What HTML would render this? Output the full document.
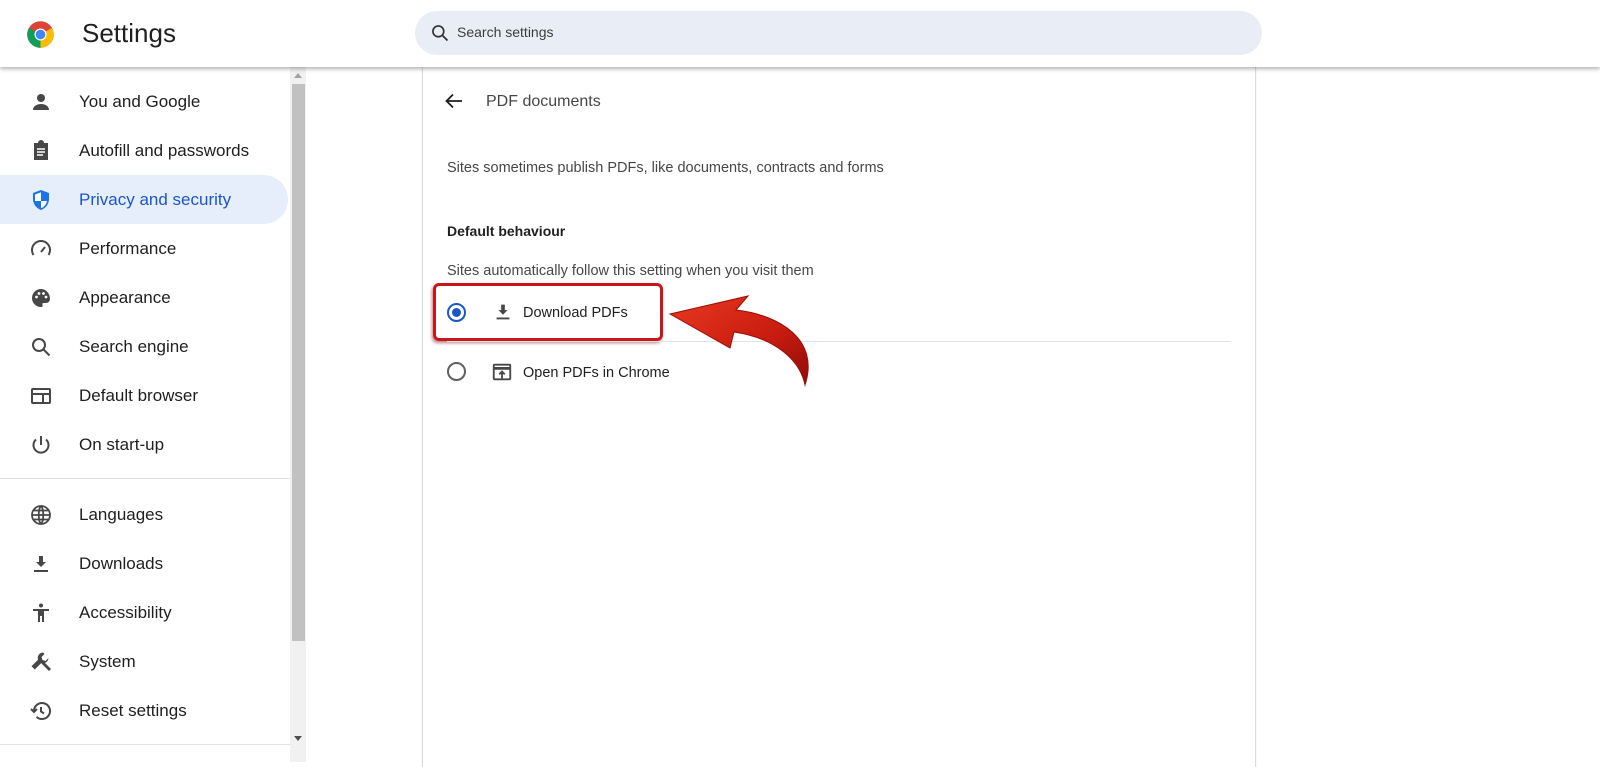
<!DOCTYPE html>
<html><head><meta charset="utf-8"><style>
*{margin:0;padding:0;box-sizing:border-box}
body{width:1600px;height:762px;overflow:hidden;background:#fff;font-family:"Liberation Sans",sans-serif;position:relative;color:#1f1f1f}
.hdr{position:absolute;left:0;top:0;width:1600px;height:67px;background:#fff;box-shadow:0 2px 4px rgba(0,0,0,.3);z-index:5}
.title{position:absolute;left:82px;top:18px;font-size:26px;color:#1f1f1f}
.search{position:absolute;left:415px;top:11px;width:847px;height:44px;border-radius:22px;background:#e9eef6}
.search span{position:absolute;left:42px;top:13px;font-size:14px;color:#3c3c3c}
.nav{position:absolute;left:0;width:288px;height:49px;}
.nav .t{position:absolute;left:79px;top:15px;font-size:17px;color:#1f1f1f}
.nav svg{position:absolute;left:29px;top:13px}
.nav.sel{background:#e6eefb;border-radius:0 25px 25px 0}
.nav.sel .t{color:#1a56c8}
.sep{position:absolute;left:0;width:290px;height:1px;background:#e3e3e3}
.card{position:absolute;left:422px;top:67px;width:834px;height:700px;border-left:1px solid #dcdcdc;border-right:1px solid #dcdcdc;box-shadow:0 0 2px rgba(0,0,0,.08)}
.txt{position:absolute;font-size:14.5px;color:#474747}
</style></head><body>
<div class="hdr">
<svg style="position:absolute;left:26px;top:20px" width="29" height="29" viewBox="0 0 48 48">
<circle cx="24" cy="24" r="22" fill="#db4437"/>
<path d="M24 24 L43.05 13 A22 22 0 0 1 24 46 Z" fill="#fbbc05"/>
<path d="M24 24 L24 46 A22 22 0 0 1 4.95 13 Z" fill="#0f9d58"/>
<circle cx="24" cy="24" r="10" fill="#fff"/><circle cx="24" cy="24" r="8" fill="#4285f4"/>
</svg>
<div class="title">Settings</div>
<div class="search"><svg style="position:absolute;left:15px;top:12px" width="20" height="20" viewBox="0 0 24 24"><circle cx="10" cy="10" r="6.5" fill="none" stroke="#333" stroke-width="2"/><path d="M15 15l6 6" stroke="#333" stroke-width="2.2"/></svg><span>Search settings</span></div>
</div>

<div class="nav" style="top:77px"><svg width="24" height="24" viewBox="0 0 24 24" fill="#474747"><circle cx="12" cy="8" r="4"/><path d="M4 20c0-4 4-6 8-6s8 2 8 6z"/></svg><div class="t">You and Google</div></div>
<div class="nav" style="top:126px"><svg width="24" height="24" viewBox="0 0 24 24" fill="#474747"><path d="M5 4h4a3 3 0 0 1 6 0h4v17H5z"/><path d="M8 10h8M8 13h8M8 16h6" stroke="#fff" stroke-width="1.4"/></svg><div class="t">Autofill and passwords</div></div>
<div class="nav sel" style="top:175px"><svg width="24" height="24" viewBox="0 0 24 24"><path d="M12 2l8 3v6c0 5-3.5 9.5-8 11-4.5-1.5-8-6-8-11V5z" fill="#1a73e8"/><path d="M12 4.3v8.7H6V6.5zM12 13h6c-.7 3.5-3 6.2-6 7.3z" fill="#fff"/></svg><div class="t">Privacy and security</div></div>
<div class="nav" style="top:224px"><svg width="24" height="24" viewBox="0 0 24 24" fill="none" stroke="#474747" stroke-width="2"><path d="M4.5 18a9 9 0 1 1 15 0"/><path d="M12 15l4-5"/></svg><div class="t">Performance</div></div>
<div class="nav" style="top:273px"><svg width="24" height="24" viewBox="0 0 24 24" fill="#474747"><path d="M12 3a9 9 0 0 0 0 18c1.5 0 2-1 1.5-2s0-2 1.5-2h2a4 4 0 0 0 4-4c0-5.5-4-10-9-10z"/><circle cx="7.5" cy="11" r="1.4" fill="#fff"/><circle cx="10" cy="7.5" r="1.4" fill="#fff"/><circle cx="14.5" cy="7.5" r="1.4" fill="#fff"/><circle cx="17" cy="11" r="1.4" fill="#fff"/></svg><div class="t">Appearance</div></div>
<div class="nav" style="top:322px"><svg width="24" height="24" viewBox="0 0 24 24" fill="none" stroke="#474747" stroke-width="2"><circle cx="10" cy="10" r="6"/><path d="M14.5 14.5l6 6"/></svg><div class="t">Search engine</div></div>
<div class="nav" style="top:371px"><svg width="24" height="24" viewBox="0 0 24 24" fill="none" stroke="#474747" stroke-width="2"><rect x="3" y="5" width="18" height="14" rx="1"/><path d="M3 10h18M14 10v9"/></svg><div class="t">Default browser</div></div>
<div class="nav" style="top:420px"><svg width="24" height="24" viewBox="0 0 24 24" fill="none" stroke="#474747" stroke-width="2"><path d="M12 3v9"/><path d="M7 6.5a7.5 7.5 0 1 0 10 0"/></svg><div class="t">On start-up</div></div>
<div class="sep" style="top:478px"></div>
<div class="nav" style="top:490px"><svg width="24" height="24" viewBox="0 0 24 24" fill="none" stroke="#474747" stroke-width="1.8"><circle cx="12" cy="12" r="9"/><path d="M3 12h18M12 3c-3 3-3 15 0 18M12 3c3 3 3 15 0 18M5 7.5h14M5 16.5h14"/></svg><div class="t">Languages</div></div>
<div class="nav" style="top:539px"><svg width="24" height="24" viewBox="0 0 24 24" fill="#474747"><path d="M10 4h4v6h3l-5 5-5-5h3zM5 18h14v2H5z"/></svg><div class="t">Downloads</div></div>
<div class="nav" style="top:588px"><svg width="24" height="24" viewBox="0 0 24 24" fill="#474747"><circle cx="12" cy="4.5" r="2"/><path d="M4 8h16v2h-5v11h-2v-6h-2v6H9V10H4z"/></svg><div class="t">Accessibility</div></div>
<div class="nav" style="top:637px"><svg width="24" height="24" viewBox="0 0 24 24" fill="#474747"><path d="M14 2.5a5.5 5.5 0 0 0-5 7.2L2.5 16.2l3.3 3.3 6.5-6.5A5.5 5.5 0 0 0 19.5 8l-3 3-3-1-1-3 3-3a5 5 0 0 0-1.5-1.5z"/><path d="M12 13l8 8 2-2-8-8z"/></svg><div class="t">System</div></div>
<div class="nav" style="top:686px"><svg width="24" height="24" viewBox="0 0 24 24" fill="none" stroke="#474747" stroke-width="2"><path d="M5 12a8 8 0 1 1 2.5 5.8"/><path d="M2 10l3 3 3-3"/><path d="M12 8v4.5l3 2"/></svg><div class="t">Reset settings</div></div>
<div class="sep" style="top:744px"></div>

<div style="position:absolute;left:290px;top:67px;width:16px;height:695px;background:#f1f1f1"></div>
<div style="position:absolute;left:292px;top:84px;width:13px;height:557px;background:#c1c1c1"></div>
<div style="position:absolute;left:294px;top:73px;width:0;height:0;border-left:4px solid transparent;border-right:4px solid transparent;border-bottom:5px solid #a3a3a3"></div>
<div style="position:absolute;left:294px;top:736px;width:0;height:0;border-left:4px solid transparent;border-right:4px solid transparent;border-top:5px solid #505050"></div>

<div class="card"></div>
<svg style="position:absolute;left:444px;top:91px" width="20" height="20" viewBox="0 0 20 20" fill="none" stroke="#1f1f1f" stroke-width="1.8"><path d="M18 10H3M9 3.5L2.5 10 9 16.5"/></svg>
<div class="txt" style="left:486px;top:93px;font-size:16px">PDF documents</div>
<div class="txt" style="left:447px;top:160px">Sites sometimes publish PDFs, like documents, contracts and forms</div>
<div class="txt" style="left:447px;top:223px;font-weight:bold;color:#1f1f1f;font-size:14px">Default behaviour</div>
<div class="txt" style="left:447px;top:263px">Sites automatically follow this setting when you visit them</div>

<div style="position:absolute;left:433px;top:283px;width:230px;height:58px;border:3px solid #c8171c;border-radius:6px;box-shadow:-1px 2px 3px rgba(120,0,0,.5)"></div>
<div style="position:absolute;left:447px;top:303px;width:19px;height:19px;border:2px solid #1a56c8;border-radius:50%"></div>
<div style="position:absolute;left:452px;top:308px;width:9px;height:9px;background:#1a56c8;border-radius:50%"></div>
<svg style="position:absolute;left:492px;top:301px" width="22" height="22" viewBox="0 0 24 24" fill="#474747"><path d="M10 4h4v6h3l-5 5-5-5h3zM5 18h14v2H5z"/></svg>
<div class="txt" style="left:523px;top:305px;color:#1f1f1f">Download PDFs</div>
<div style="position:absolute;left:447px;top:341px;width:784px;height:1px;background:#e3e3e3"></div>
<div style="position:absolute;left:447px;top:362px;width:19px;height:19px;border:2px solid #5f5f5f;border-radius:50%"></div>
<svg style="position:absolute;left:491px;top:361px" width="22" height="22" viewBox="0 0 24 24" fill="none" stroke="#474747" stroke-width="2"><rect x="3" y="4" width="18" height="16" rx="1"/><path d="M3 8h18" stroke-width="3"/><path d="M12 19v-7M9 14.5l3-3 3 3"/></svg>
<div class="txt" style="left:523px;top:365px;color:#1f1f1f">Open PDFs in Chrome</div>

<svg style="position:absolute;left:660px;top:290px" width="170" height="100" viewBox="0 0 170 100">
<defs><linearGradient id="g" x1="0" y1="0" x2="1" y2="1"><stop offset="0" stop-color="#e8391f"/><stop offset=".6" stop-color="#c81b10"/><stop offset="1" stop-color="#8e0c06"/></linearGradient></defs>
<path d="M10 24 L88 6 L76 20 C120 25 160 50 145 95 C140 70 115 48 74 42 L70 58 Z" fill="url(#g)" stroke="#9a0e08" stroke-width="1"/>
</svg>
</body></html>
